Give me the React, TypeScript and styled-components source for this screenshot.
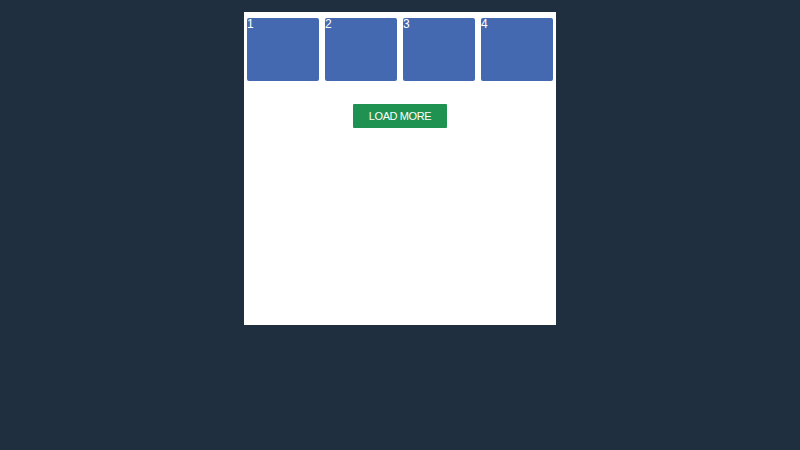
import styled, { createGlobalStyle } from 'styled-components';

const GlobalStyle = createGlobalStyle`
  html, body {
    margin: 0;
    padding: 0;
    background: #202f40;
    font-family: 'Liberation Sans', Arial, sans-serif;
  }
`;

const Page = styled.main`
  display: flex;
  justify-content: center;
  padding-top: 12px;
`;

const Panel = styled.section`
  width: 312px;
  height: 313px;
  box-sizing: border-box;
  background: #ffffff;
  padding-top: 6px;
  display: flex;
  flex-direction: column;
  align-items: center;
`;

const Grid = styled.div`
  display: grid;
  grid-template-columns: repeat(4, 72px);
  column-gap: 6px;
`;

const Card = styled.div`
  height: 63px;
  background: #4569b0;
  border-radius: 2px;
  color: #ffffff;
  font-size: 12px;
  line-height: 13px;
  box-sizing: border-box;
`;

const LoadButton = styled.button`
  margin-top: 23px;
  width: 94px;
  height: 24px;
  border: none;
  border-radius: 1px;
  background: #1f9150;
  color: #ffffff;
  font-family: 'Liberation Sans', Arial, sans-serif;
  font-size: 11px;
  letter-spacing: -0.4px;
  cursor: pointer;
`;

const items = [1, 2, 3, 4];

function App() {
  return (
    <>
      <GlobalStyle />
      <Page>
        <Panel>
          <Grid>
            {items.map((n) => (
              <Card key={n}>{n}</Card>
            ))}
          </Grid>
          <LoadButton type='button'>LOAD MORE</LoadButton>
        </Panel>
      </Page>
    </>
  );
}

export default App;
